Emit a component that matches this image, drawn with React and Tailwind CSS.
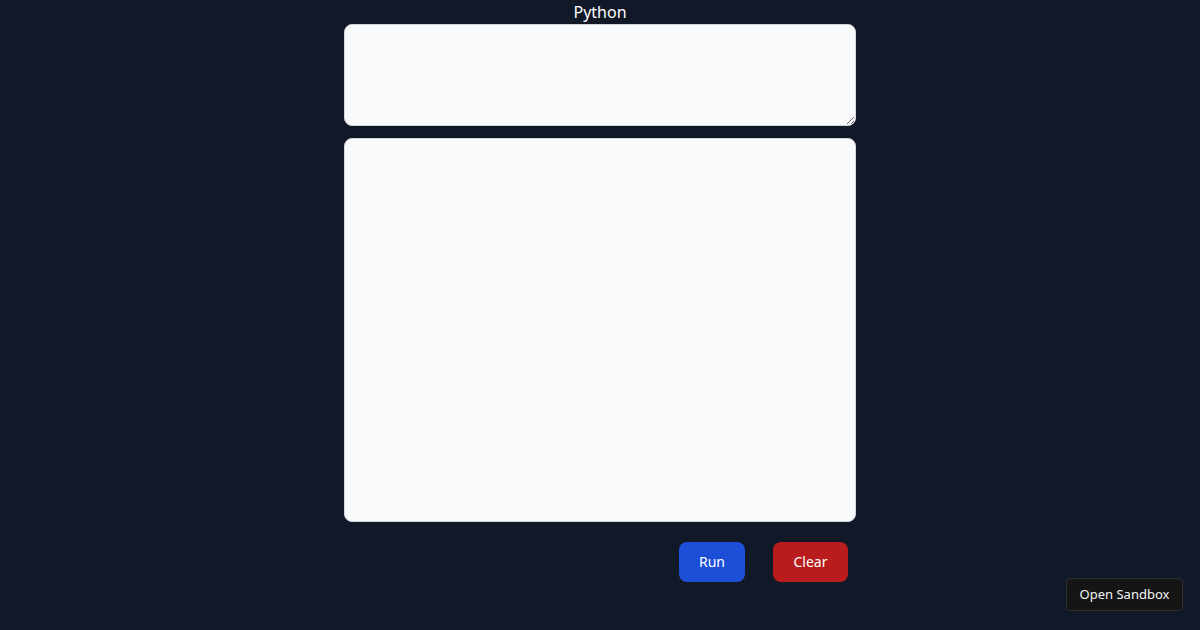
export default function App() {
  return (
    <div className="min-h-[630px] w-full bg-[#111827] relative" style={{ fontFamily: '"Noto Sans", "Open Sans", sans-serif' }}>
      <div className="w-[512px] mx-auto flex flex-col">
        <div className="text-white text-base leading-6 text-center">Python</div>
        <textarea className="block w-full h-[102px] rounded-lg border border-gray-300 bg-gray-50 p-2.5 text-sm text-gray-900 outline-none" />
        <textarea className="block w-full h-[384px] mt-3 rounded-lg border border-gray-300 bg-gray-50 p-2.5 text-sm text-gray-900 outline-none resize-none" />
        <div className="flex justify-end gap-7 mt-5 mr-2">
          <button className="h-10 w-[66px] rounded-lg bg-[#1d4ed8] text-sm text-white">Run</button>
          <button className="h-10 w-[75px] rounded-lg bg-[#b91c1c] text-sm text-white">Clear</button>
        </div>
      </div>
      <button className="absolute right-[17px] bottom-[19px] h-[33px] w-[117px] rounded border border-[#2e2e2e] bg-[#151515] text-[13px] text-gray-100">Open Sandbox</button>
    </div>
  );
}
